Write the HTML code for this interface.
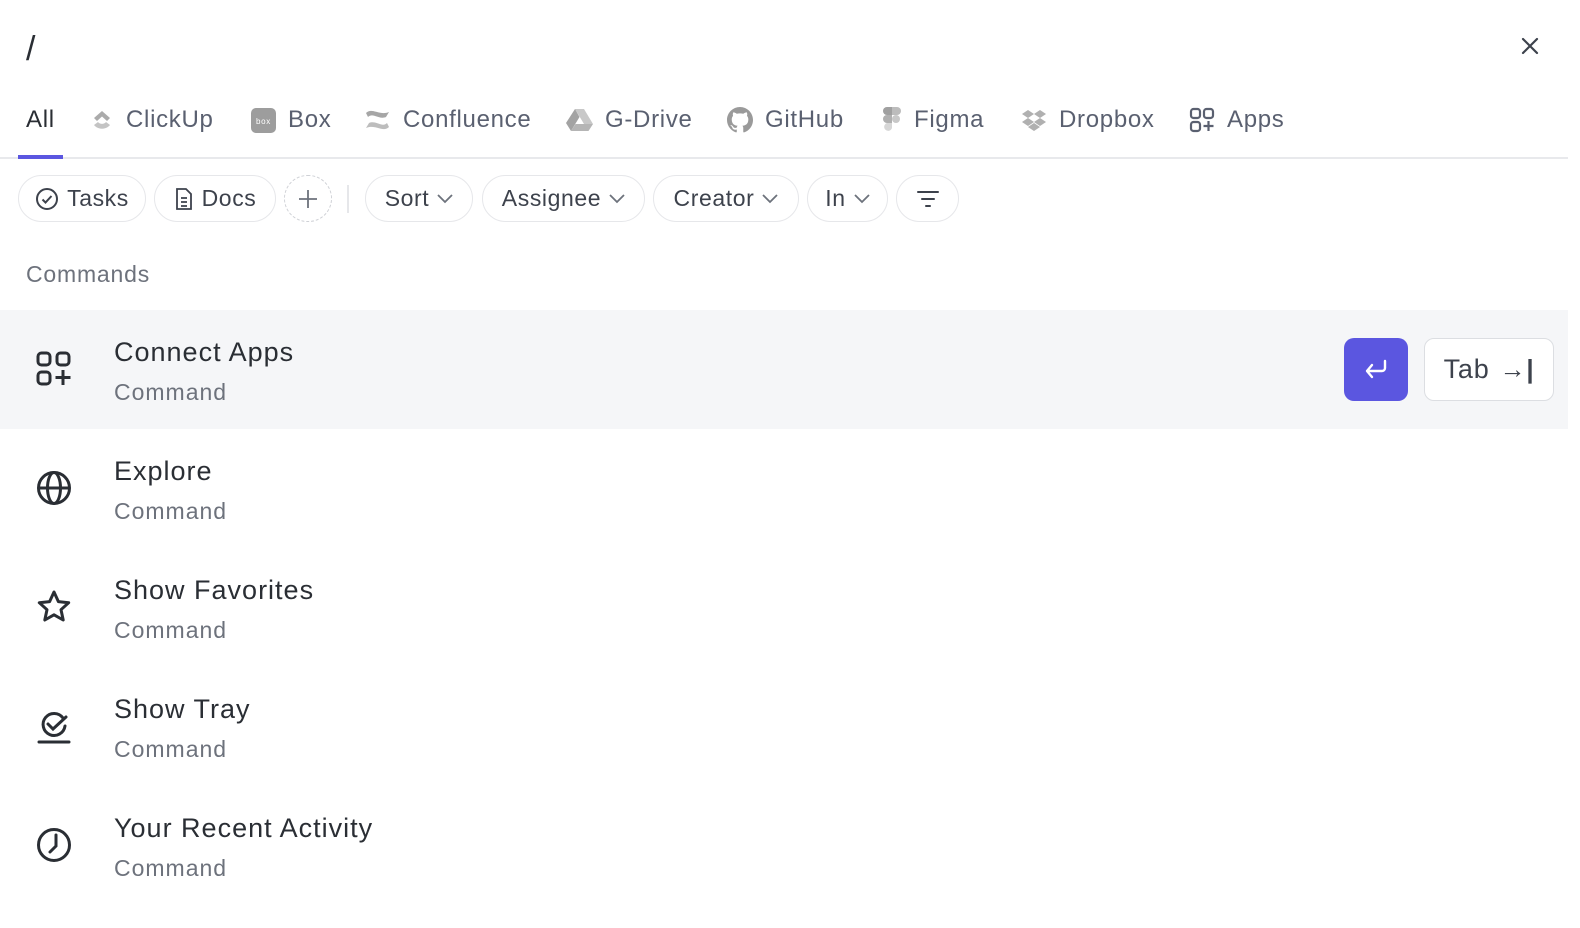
<!DOCTYPE html>
<html><head><meta charset="utf-8"><style>
*{margin:0;padding:0;box-sizing:border-box}
body{width:1580px;height:928px;background:#fff;font-family:"Liberation Sans",sans-serif;color:#2a2e34;position:relative;overflow:hidden}
.a{position:absolute}
.tab{position:absolute;top:106px;font-size:24px;letter-spacing:0.7px;color:#5a6070;display:flex;align-items:center;gap:12px;white-space:nowrap}
.tab svg{flex:none}
.pill{position:absolute;top:175px;height:47px;border:1.5px solid #e6e7ea;border-radius:24px;display:flex;align-items:center;justify-content:center;font-size:23px;letter-spacing:0.6px;color:#3d424c;gap:8px}
.row{position:absolute;left:0;width:1568px;height:119px}
.row .t{position:absolute;left:114px;top:27px;font-size:27px;letter-spacing:1px;color:#2a2e34}
.row .s{position:absolute;left:114px;top:69px;font-size:23px;letter-spacing:1px;color:#6d727c}
.row svg{position:absolute;left:36px;top:41px}
</style></head><body>
<div class="a" style="left:26px;top:30px;font-size:34px;color:#2a2e34">/</div>
<svg class="a" style="left:1520px;top:36px" width="20" height="20" viewBox="0 0 20 20"><path d="M3 3L17 17M17 3L3 17" stroke="#3d424c" stroke-width="2.2" stroke-linecap="round"/></svg>

<div class="tab" style="left:26px;color:#2a2e34">All</div>
<div class="tab" style="left:90px"><svg width="24" height="26" viewBox="0 0 24 26"><path d="M4 18l4-3c2 2.5 6 2.5 8 0l4 3c-4 5-12 5-16 0z" fill="#c4c4c4"/><path d="M12 4l-8 7 3 3 5-4.5 5 4.5 3-3z" fill="#ababab"/></svg>ClickUp</div>
<div class="tab" style="left:251px"><svg width="25" height="25" viewBox="0 0 25 25"><rect width="25" height="25" rx="5" fill="#9d9d9d"/><text x="12.5" y="16" font-size="8" fill="#fff" text-anchor="middle" font-family="Liberation Sans">box</text></svg>Box</div>
<div class="tab" style="left:364px"><svg width="27" height="26" viewBox="0 0 27 26"><path d="M2 6c6-6 13 3 23-1l-3 5c-7 3-13-5-18 0z" fill="#a6a6a6"/><path d="M25 20c-6 6-13-3-23 1l3-5c7-3 13 5 18 0z" fill="#bdbdbd"/></svg>Confluence</div>
<div class="tab" style="left:566px"><svg width="27" height="24" viewBox="0 0 27 24"><path d="M9 1h9l9 15h-9z" fill="#c8c8c8"/><path d="M9 1l4.5 8L5 23 0 15z" fill="#a3a3a3"/><path d="M5 23l4.5-7H27l-4.5 7z" fill="#b5b5b5"/></svg>G-Drive</div>
<div class="tab" style="left:727px"><svg width="26" height="26" viewBox="0 0 16 16"><path fill="#9a9a9a" d="M8 0C3.58 0 0 3.58 0 8c0 3.540 2.29 6.53 5.47 7.59.4.07.55-.17.55-.38v-1.33c-2.23.48-2.7-1.070-2.7-1.070-.36-.93-.89-1.17-.89-1.17-.73-.5.06-.49.06-.49.8.06 1.23.83 1.23.83.71 1.23 1.87.87 2.33.66.07-.52.28-.87.51-1.070-1.78-.2-3.64-.89-3.64-3.95 0-.87.31-1.59.82-2.15-.08-.2-.36-1.02.08-2.12 0 0 .67-.21 2.2.82.64-.18 1.32-.27 2-.27.68 0 1.36.09 2 .27 1.53-1.04 2.2-.82 2.2-.82.44 1.1.16 1.92.08 2.12.51.56.82 1.27.82 2.15 0 3.070-1.87 3.75-3.65 3.95.29.25.54.73.54 1.48v2.2c0 .21.15.46.55.38A8.01 8.01 0 0016 8c0-4.42-3.58-8-8-8z"/></svg>GitHub</div>
<div class="tab" style="left:882px"><svg width="20" height="28" viewBox="0 0 20 28"><path d="M5 1h5v8H5a4 4 0 010-8z" fill="#a0a0a0"/><path d="M10 1h5a4 4 0 010 8h-5z" fill="#bcbcbc"/><path d="M5 9h5v8H5a4 4 0 010-8z" fill="#b0b0b0"/><circle cx="14" cy="13" r="4" fill="#c8c8c8"/><path d="M5 17h5v5a4 4 0 11-5-5z" fill="#d6d6d6"/></svg>Figma</div>
<div class="tab" style="left:1021px"><svg width="26" height="22" viewBox="0 0 26 22"><path d="M7 1l6 4-6 4-6-4zM19 1l6 4-6 4-6-4zM7 9l6 4-6 4-6-4zM19 9l6 4-6 4-6-4zM13 14l6 4-6 4-6-4z" fill="#b0b0b0"/></svg>Dropbox</div>
<div class="tab" style="left:1189px"><svg width="26" height="26" viewBox="0 0 26 26" fill="none" stroke="#5a6070" stroke-width="2.2"><rect x="2" y="2" width="9" height="9" rx="2.5"/><rect x="15" y="2" width="9" height="9" rx="2.5"/><rect x="2" y="15" width="9" height="9" rx="2.5"/><path d="M19.5 14v10M14.5 19h10"/></svg>Apps</div>
<div class="a" style="left:0;top:157px;width:1568px;height:2px;background:#e8e9ec"></div>
<div class="a" style="left:18px;top:155px;width:45px;height:4px;background:#5b56e0"></div>

<div class="pill" style="left:18px;width:128px"><svg width="24" height="24" viewBox="0 0 24 24" fill="none" stroke="#3d424c" stroke-width="2"><circle cx="12" cy="12" r="10"/><path d="M7.5 12.5l3 3 6-6.5"/></svg>Tasks</div>
<div class="pill" style="left:154px;width:122px"><svg width="20" height="24" viewBox="0 0 20 24" fill="none" stroke="#3d424c" stroke-width="1.8"><path d="M3 2h9l5 5v15H3z"/><path d="M7 11h6M7 15h6M7 19h6"/></svg>Docs</div>
<div class="pill" style="left:284px;width:48px;border:1.5px dashed #cfd1d6"><svg width="22" height="22" viewBox="0 0 22 22"><path d="M11 2v18M2 11h18" stroke="#6d727c" stroke-width="1.8"/></svg></div>
<div class="a" style="left:347px;top:185px;width:2px;height:28px;background:#e6e7ea"></div>
<div class="pill" style="left:365px;width:108px">Sort <svg width="16" height="10" viewBox="0 0 16 10"><path d="M1 1l7 7 7-7" fill="none" stroke="#6d727c" stroke-width="1.8"/></svg></div>
<div class="pill" style="left:482px;width:163px">Assignee <svg width="16" height="10" viewBox="0 0 16 10"><path d="M1 1l7 7 7-7" fill="none" stroke="#6d727c" stroke-width="1.8"/></svg></div>
<div class="pill" style="left:653px;width:146px">Creator <svg width="16" height="10" viewBox="0 0 16 10"><path d="M1 1l7 7 7-7" fill="none" stroke="#6d727c" stroke-width="1.8"/></svg></div>
<div class="pill" style="left:807px;width:81px">In <svg width="16" height="10" viewBox="0 0 16 10"><path d="M1 1l7 7 7-7" fill="none" stroke="#6d727c" stroke-width="1.8"/></svg></div>
<div class="pill" style="left:896px;width:63px"><svg width="24" height="18" viewBox="0 0 24 18"><path d="M2 2h20M6 9h12M10 16h4" stroke="#3d424c" stroke-width="2" stroke-linecap="round"/></svg></div>

<div class="a" style="left:26px;top:261px;font-size:23px;letter-spacing:0.8px;color:#6d727c">Commands</div>

<div class="row" style="top:310px;background:#f5f6f8">
<svg width="36" height="36" viewBox="0 0 36 36" fill="none" stroke="#2a2e34" stroke-width="3"><rect x="2" y="2" width="12" height="12" rx="3.5"/><rect x="21" y="2" width="12" height="12" rx="3.5"/><rect x="2" y="21" width="12" height="12" rx="3.5"/><path d="M27 19v15M19.5 26.5h15"/></svg>
<div class="t">Connect Apps</div><div class="s">Command</div>
<div class="a" style="left:1344px;top:28px;width:64px;height:63px;background:#5b56e0;border-radius:10px"><svg style="left:20px;top:21px;position:absolute" width="24" height="20" viewBox="0 0 24 20"><path d="M21 2v7a3 3 0 01-3 3H3M8 6l-5 6 5 6" fill="none" stroke="#fff" stroke-width="2.4" stroke-linecap="round" stroke-linejoin="round"/></svg></div>
<div class="a" style="left:1424px;top:28px;width:130px;height:63px;background:#fff;border:1.5px solid #dcdee2;border-radius:10px;font-size:27px;letter-spacing:0.8px;color:#3d424c;display:flex;align-items:center;justify-content:center;gap:10px">Tab <span style="font-size:26px;font-weight:bold">→|</span></div>
</div>
<div class="row" style="top:429px">
<svg width="36" height="36" viewBox="0 0 36 36" fill="none" stroke="#2a2e34" stroke-width="3"><circle cx="18" cy="18" r="15.5"/><path d="M2.5 18h31"/><ellipse cx="18" cy="18" rx="6.5" ry="15.5"/></svg>
<div class="t">Explore</div><div class="s">Command</div></div>
<div class="row" style="top:548px">
<svg width="36" height="36" viewBox="0 0 36 36" fill="none" stroke="#2a2e34" stroke-width="3" stroke-linejoin="round"><path d="M18 3l4.4 9.6 10.3 1.1-7.7 7 2.2 10.3L18 25.8 8.8 31l2.2-10.3-7.7-7 10.3-1.1z"/></svg>
<div class="t">Show Favorites</div><div class="s">Command</div></div>
<div class="row" style="top:667px">
<svg width="36" height="36" viewBox="0 0 36 36" fill="none" stroke="#2a2e34" stroke-width="3" stroke-linecap="round"><path d="M27 10A11 11 0 1 0 29 18"/><path d="M12 16l5 5 13-12"/><path d="M3 34h30"/></svg>
<div class="t">Show Tray</div><div class="s">Command</div></div>
<div class="row" style="top:786px">
<svg width="36" height="36" viewBox="0 0 36 36" fill="none" stroke="#2a2e34" stroke-width="3" stroke-linecap="round"><circle cx="18" cy="18" r="15.5"/><path d="M20 8v11l-6 6"/></svg>
<div class="t">Your Recent Activity</div><div class="s">Command</div></div>
</body></html>
